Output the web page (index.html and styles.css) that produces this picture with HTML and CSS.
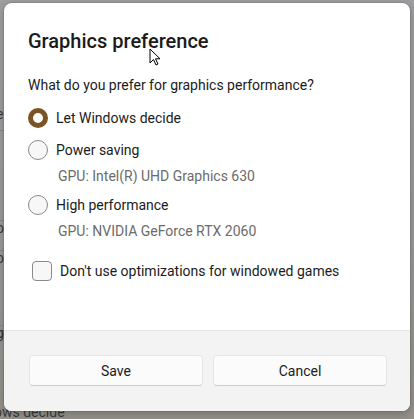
FILE: index.html
```html
<!DOCTYPE html>
<html>
<head>
<meta charset="utf-8">
<link rel="stylesheet" href="styles.css">
</head>
<body>
<div class="backdrop">
  <div class="bg-row r1"><span>e</span></div>
  <div class="bg-row r2"><span>o</span></div>
  <div class="bg-row r3"><span>o</span></div>
  <div class="bg-row r4"><span>g</span><span>o</span></div>
  <div class="bg-bottom"><span>ows decide</span></div>
</div>
<div class="dialog">
  <div class="content">
    <h1 class="title">Graphics preference</h1>
    <p class="question">What do you prefer for graphics performance?</p>
    <div class="option">
      <span class="radio checked"></span>
      <span class="label">Let Windows decide</span>
    </div>
    <div class="option">
      <span class="radio"></span>
      <span class="label">Power saving</span>
    </div>
    <div class="sub">GPU: Intel(R) UHD Graphics 630</div>
    <div class="option">
      <span class="radio"></span>
      <span class="label">High performance</span>
    </div>
    <div class="sub">GPU: NVIDIA GeForce RTX 2060</div>
    <div class="check-row">
      <span class="checkbox"></span>
      <span class="label">Don't use optimizations for windowed games</span>
    </div>
  </div>
  <div class="footer">
    <button class="btn">Save</button>
    <button class="btn">Cancel</button>
  </div>
  <svg class="cursor" width="14" height="20" viewBox="0 0 14 20"><path d="M1 1 L1 15 L4.5 11.5 L7 17 L9 16 L6.5 10.8 L11 10.8 Z" fill="#fff" stroke="#000" stroke-width="1" stroke-linejoin="round"/></svg>
</div>
</body>
</html>
```

FILE: styles.css
```css
* { box-sizing: border-box; }
html, body { margin: 0; padding: 0; }
body {
  width: 414px;
  height: 419px;
  overflow: hidden;
  background: #9d9d9f;
  font-family: "Segoe UI", Roboto, "Noto Sans", sans-serif;
  position: relative;
}
.backdrop {
  position: absolute;
  inset: 0;
  background: linear-gradient(180deg, #a0a0a2 0%, #9b9b9b 60%, #94918a 100%);
}
.bg-row {
  height: 1px;
  background: #8a8a8a;
  position: absolute;
  left: 0;
  width: 20px;
  font-size: 14px;
  color: #3a3a3a;
}
.bg-row span { position: absolute; left: -4px; top: 0; }
.r1 { top: 130px; }
.r1 span { top: -24px; }
.r2 { top: 220px; }
.r3 { top: 250px; }
.r4 { top: 325px; }
.bg-bottom {
  position: absolute;
  left: -6px;
  top: 404px;
  font-size: 14px;
  color: #3a3a3a;
}
.dialog {
  position: absolute;
  left: 4px;
  top: 3px;
  width: 406px;
  height: 408px;
  background: #ffffff;
  border-radius: 8px;
  box-shadow: 0 2px 10px rgba(0,0,0,0.25), 0 0 0 1px rgba(0,0,0,0.08);
  display: flex;
  flex-direction: column;
  overflow: hidden;
}
.content {
  flex: 1;
  padding: 24px 24px 0 24px;
  color: #1b1b1b;
}
.title {
  margin: 0;
  font-size: 20px;
  font-weight: 500;
  line-height: 28px;
}
.question {
  margin: 20px 0 0 0;
  font-size: 14px;
  line-height: 20px;
}
.option {
  display: flex;
  align-items: center;
  gap: 8px;
  height: 32px;
  font-size: 14px;
}
.question + .option { margin-top: 7px; }
.radio {
  width: 20px;
  height: 20px;
  border-radius: 50%;
  border: 1px solid #8a8a8a;
  background: #f7f7f7;
}
.radio.checked {
  border: 5px solid #7a5422;
  background: #ffffff;
}
.sub {
  font-size: 14px;
  color: #6b6b6b;
  padding-left: 30px;
  line-height: 20px;
  margin-bottom: 3px;
}
.check-row {
  display: flex;
  align-items: center;
  gap: 8px;
  margin-top: 20px;
  padding-left: 4px;
  font-size: 14px;
}
.checkbox {
  width: 20px;
  height: 20px;
  border-radius: 4px;
  border: 1px solid #8a8a8a;
  background: #f7f7f7;
}
.footer {
  height: 81px;
  background: #f3f3f3;
  border-top: 1px solid #e5e5e5;
  display: flex;
  gap: 10px;
  padding: 24px 23px 0 25px;
}
.btn {
  flex: 1;
  height: 31px;
  background: #fbfbfb;
  border: 1px solid #e5e5e5;
  border-bottom-color: #cccccc;
  border-radius: 4px;
  font-family: inherit;
  font-size: 14px;
  color: #1b1b1b;
}
.cursor {
  position: absolute;
  left: 145px;
  top: 45px;
}
```
